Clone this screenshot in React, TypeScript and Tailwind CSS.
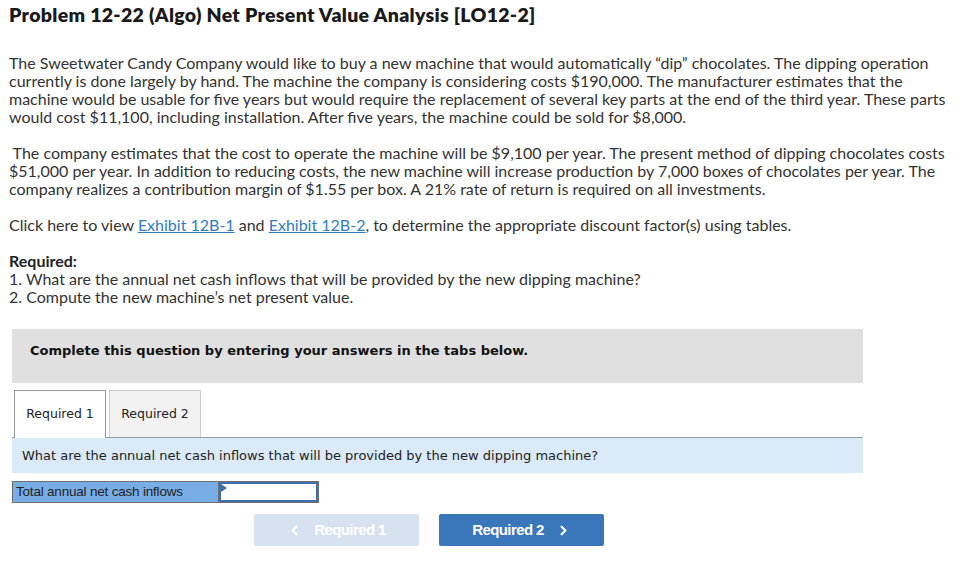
import React from "react"
import { ChevronLeft, ChevronRight } from "lucide-react"

function App() {
  return (
    <div className="w-[964px] h-[562px] bg-white text-[#333] overflow-hidden" style={{ fontFamily: "Lato, 'Liberation Sans', sans-serif" }}>
      <h1 className="pl-[9px] pt-[3px] text-[19.5px] leading-[24px] font-extrabold text-[#1a1a1a] tracking-[0.3px]">
        Problem 12-22 (Algo) Net Present Value Analysis [LO12-2]
      </h1>

      <div className="pl-[9px] text-[16px] leading-[18px]">
        <p className="mt-[27px]">
          The Sweetwater Candy Company would like to buy a new machine that would automatically “dip” chocolates. The dipping operation<br />
          currently is done largely by hand. The machine the company is considering costs $190,000. The manufacturer estimates that the<br />
          machine would be usable for five years but would require the replacement of several key parts at the end of the third year. These parts<br />
          would cost $11,100, including installation. After five years, the machine could be sold for $8,000.
        </p>
        <p className="mt-[18px]">
          &nbsp;The company estimates that the cost to operate the machine will be $9,100 per year. The present method of dipping chocolates costs<br />
          $51,000 per year. In addition to reducing costs, the new machine will increase production by 7,000 boxes of chocolates per year. The<br />
          company realizes a contribution margin of $1.55 per box. A 21% rate of return is required on all investments.
        </p>
        <p className="mt-[18px]">
          Click here to view <a className="text-[#2f7cc0] underline">Exhibit 12B-1</a> and{" "}
          <a className="text-[#2f7cc0] underline">Exhibit 12B-2</a>, to determine the appropriate discount factor(s) using tables.
        </p>
        <div className="mt-[18px]">
          <div className="font-bold text-[#222]">Required:</div>
          <div>1. What are the annual net cash inflows that will be provided by the new dipping machine?</div>
          <div>2. Compute the new machine’s net present value.</div>
        </div>
      </div>

      <div className="ml-[12px] w-[851px]" style={{ fontFamily: "'DejaVu Sans', Verdana, sans-serif" }}>
        <div className="mt-[23px] h-[54px] bg-[#e0e0e0] pl-[18px] pt-[13px] text-[13px] leading-[18px] font-bold text-[#111]">
          Complete this question by entering your answers in the tabs below.
        </div>

        <div className="mt-[7px] flex border-b border-[#999] pl-[2px] gap-[3px] h-[48px]">
          <div className="w-[92px] h-[48px] -mb-px bg-white border border-b-0 border-[#999] flex items-center justify-center text-[12.5px] text-[#222]">
            Required 1
          </div>
          <div className="w-[92px] h-[47px] bg-[#f2f2f2] border border-b-0 border-[#ccc] flex items-center justify-center text-[12.5px] text-[#222]">
            Required 2
          </div>
        </div>

        <div className="h-[35px] bg-[#dbeaf8] flex items-center pl-[10px] text-[13px] text-[#222]">
          What are the annual net cash inflows that will be provided by the new dipping machine?
        </div>

        <div className="mt-[8px] flex w-[307px] h-[22px] border border-[#6f6f6f]" style={{ fontFamily: "'Liberation Sans', Arial, sans-serif" }}>
          <div className="w-[206px] bg-[#79ade6] border-r border-[#6f6f6f] flex items-center pl-[3px] text-[13.5px] text-[#222] tracking-[-0.2px]">
            Total annual net cash inflows
          </div>
          <div className="relative flex-1 bg-white border-2 border-[#3a6fb2]">
            <svg className="absolute left-0 top-0" width="6" height="8" viewBox="0 0 6 8">
              <path d="M0 0 L6 4 L0 8 Z" fill="#3a6fb2" />
            </svg>
          </div>
        </div>

        <div className="mt-[11px] flex gap-[20px] pl-[242px]" style={{ fontFamily: "'Liberation Sans', Arial, sans-serif" }}>
          <button className="w-[165px] h-[32px] rounded-[2px] bg-[#d6e2f0] text-white text-[15px] font-bold flex items-center justify-center gap-[12px] tracking-[-0.6px]">
            <ChevronLeft size={15} strokeWidth={3.5} />
            <span>Required 1</span>
          </button>
          <button className="w-[165px] h-[32px] rounded-[2px] bg-[#3a76ba] text-white text-[15px] font-bold flex items-center justify-center gap-[12px] tracking-[-0.6px]">
            <span>Required 2</span>
            <ChevronRight size={15} strokeWidth={3.5} />
          </button>
        </div>
      </div>
    </div>
  )
}

export default App
